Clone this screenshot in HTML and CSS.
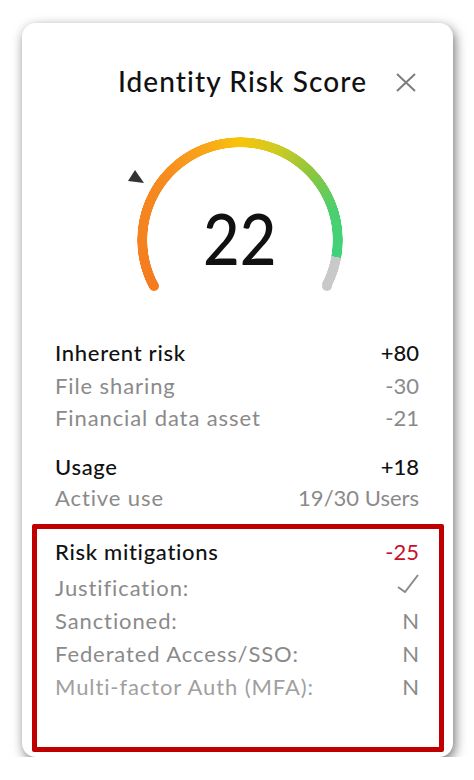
FILE: index.html
```html
<!DOCTYPE html>
<html lang="en">
  <head>
    <meta charset="UTF-8" />
    <meta name="viewport" content="width=device-width, initial-scale=1.0" />
    <title>Identity Risk Score</title>
    <link rel="stylesheet" href="styles.css">
  </head>
  <body>
    <div class="risk-card">
      <div class="card-header">
        <span></span>
        <h1 class="card-title">Identity Risk Score</h1>
        <button class="close-button" aria-label="Close">
          <svg width="20" height="19" viewBox="0 0 20 19">
            <path d="M1 1 L19 18 M19 1 L1 18" stroke="#7d7d7d" stroke-width="2" fill="none" />
          </svg>
        </button>
      </div>

      <div class="gauge">
        <div class="gauge-ring"></div>
        <span class="gauge-cap cap-start"></span>
        <span class="gauge-cap cap-end"></span>
        <svg class="gauge-marker" width="18" height="16" viewBox="0 0 18 16">
          <polygon points="8,2 1,13 17,15" fill="#333" />
        </svg>
        <div class="gauge-score">22</div>
      </div>

      <div class="score-group">
        <div class="score-row row-head first-head">
          <span>Inherent risk</span>
          <span>+80</span>
        </div>
        <div class="score-row row-sub">
          <span>File sharing</span>
          <span>-30</span>
        </div>
        <div class="score-row row-sub">
          <span>Financial data asset</span>
          <span>-21</span>
        </div>
      </div>

      <div class="score-group usage-group">
        <div class="score-row row-head usage-head">
          <span>Usage</span>
          <span>+18</span>
        </div>
        <div class="score-row row-sub">
          <span>Active use</span>
          <span>19/30 Users</span>
        </div>
      </div>

      <div class="mitigations">
        <div class="score-row row-head mitigation-head">
          <span>Risk mitigations</span>
          <span class="negative">-25</span>
        </div>
        <div class="score-row row-sub mitigation-row">
          <span>Justification:</span>
          <span class="check">
            <svg width="22" height="19" viewBox="0 0 22 19">
              <polyline points="1,13 8,18 21,1" stroke="#8a8a8a" stroke-width="2" fill="none" />
            </svg>
          </span>
        </div>
        <div class="score-row row-sub mitigation-row">
          <span>Sanctioned:</span>
          <span>N</span>
        </div>
        <div class="score-row row-sub mitigation-row">
          <span>Federated Access/SSO:</span>
          <span>N</span>
        </div>
        <div class="score-row row-sub mitigation-row faded">
          <span>Multi-factor Auth (MFA):</span>
          <span>N</span>
        </div>
      </div>
    </div>
  </body>
</html>
```

FILE: styles.css
```css
body {
  margin: 0;
  background-color: #fff;
  font-family: Lato, "Liberation Sans", sans-serif;
  color: #111;
}
.risk-card {
  width: 431px;
  height: 734px;
  margin: 23px 0 0 22px;
  box-sizing: border-box;
  background-color: #fff;
  border-radius: 14px;
  box-shadow: 2px 4px 12px rgba(0, 0, 0, 0.55);
  display: flex;
  flex-direction: column;
}
.card-header {
  display: grid;
  grid-template-columns: 1fr auto 1fr;
  align-items: center;
  padding: 41px 37px 0 47px;
}
.card-title {
  margin: 0;
  font-size: 28px;
  font-weight: 500;
  line-height: 34px;
  letter-spacing: 1.1px;
}
.close-button {
  justify-self: end;
  padding: 0;
  border: none;
  background: none;
  cursor: pointer;
  display: flex;
  margin-top: 2px;
}
.gauge {
  position: relative;
  width: 206px;
  height: 160px;
  margin: 39px 0 0 115px;
  display: grid;
  grid-template-rows: 160px;
}
.gauge-ring {
  grid-area: 1 / 1;
  width: 206px;
  height: 206px;
  border-radius: 50%;
  background: conic-gradient(
    from 242deg,
    #f47b20 0deg,
    #f68a1f 65deg,
    #f9a51a 97deg,
    #f8c40a 118deg,
    #cfcb22 140deg,
    #8cc63f 165deg,
    #4ccf6e 190deg,
    #3ed27c 218deg,
    #c9c9c9 218deg,
    #c9c9c9 236deg,
    transparent 236deg
  );
  -webkit-mask: radial-gradient(circle, transparent 92.5px, #000 93px, #000 102.5px, transparent 103px);
  mask: radial-gradient(circle, transparent 92.5px, #000 93px, #000 102.5px, transparent 103px);
}
.gauge-cap {
  position: absolute;
  top: 144px;
  width: 10px;
  height: 10px;
  border-radius: 50%;
}
.cap-start {
  left: 11.5px;
  background-color: #f47b20;
}
.cap-end {
  left: 184.5px;
  background-color: #c9c9c9;
}
.gauge-marker {
  position: absolute;
  left: -10px;
  top: 31px;
}
.gauge-score {
  grid-area: 1 / 1;
  justify-self: center;
  padding-top: 60px;
  font-size: 72px;
  line-height: 80px;
  font-weight: 500;
  transform: scaleX(0.88);
}
.score-group {
  padding: 0 34px 0 33px;
  margin-top: 38px;
}
.usage-group {
  margin-top: 18px;
}
.score-row {
  display: flex;
  justify-content: space-between;
  align-items: baseline;
  font-size: 22px;
}
.row-head {
  font-weight: 500;
  color: #111;
  line-height: 30px;
}
.row-head span:first-child {
  letter-spacing: 0.7px;
}
.first-head {
  line-height: 35px;
}
.row-sub {
  color: #8a8a8a;
  line-height: 32px;
}
.row-sub span:first-child {
  letter-spacing: 0.9px;
}
.mitigations {
  height: 228px;
  box-sizing: border-box;
  margin: 10px 9px 0 10px;
  padding: 3px 20px 0 18px;
  border: 5px solid #c00000;
  border-radius: 2px;
}
.mitigation-head {
  line-height: 39px;
}
.mitigation-row {
  line-height: 33px;
}
.negative {
  color: #c8102e;
  font-weight: 400;
}
.check svg {
  vertical-align: 3px;
}
.faded {
  color: #a0a0a0;
}
.faded span:last-child {
  color: #8a8a8a;
}
```
